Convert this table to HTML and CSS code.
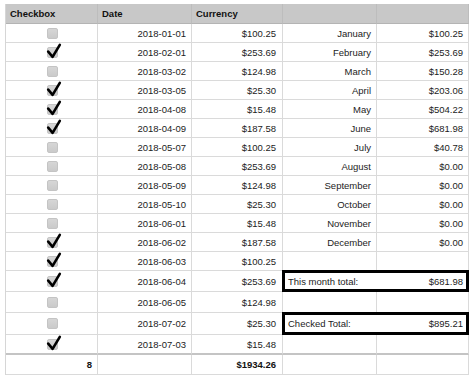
FILE: index.html
```html
<!DOCTYPE html>
<html>
<head>
<meta charset="utf-8">
<link rel="stylesheet" href="styles.css">
</head>
<body>
<div class="sheet">
  <div class="row head">
    <div class="cell">Checkbox</div><div class="cell">Date</div><div class="cell">Currency</div><div class="cell"></div><div class="cell"></div>
  </div>
  <div class="row"><div class="cell cb"><span class="box"></span></div><div class="cell num">2018-01-01</div><div class="cell num cur">$100.25</div><div class="cell num">January</div><div class="cell num">$100.25</div></div>
  <div class="row"><div class="cell cb"><span class="box on"><svg viewBox="0 0 14 15"><path d="M1.2 7.6 L5.6 12.8 L12.8 0.8"/></svg></span></div><div class="cell num">2018-02-01</div><div class="cell num cur">$253.69</div><div class="cell num">February</div><div class="cell num">$253.69</div></div>
  <div class="row"><div class="cell cb"><span class="box"></span></div><div class="cell num">2018-03-02</div><div class="cell num cur">$124.98</div><div class="cell num">March</div><div class="cell num">$150.28</div></div>
  <div class="row"><div class="cell cb"><span class="box on"><svg viewBox="0 0 14 15"><path d="M1.2 7.6 L5.6 12.8 L12.8 0.8"/></svg></span></div><div class="cell num">2018-03-05</div><div class="cell num cur">$25.30</div><div class="cell num">April</div><div class="cell num">$203.06</div></div>
  <div class="row"><div class="cell cb"><span class="box on"><svg viewBox="0 0 14 15"><path d="M1.2 7.6 L5.6 12.8 L12.8 0.8"/></svg></span></div><div class="cell num">2018-04-08</div><div class="cell num cur">$15.48</div><div class="cell num">May</div><div class="cell num">$504.22</div></div>
  <div class="row"><div class="cell cb"><span class="box on"><svg viewBox="0 0 14 15"><path d="M1.2 7.6 L5.6 12.8 L12.8 0.8"/></svg></span></div><div class="cell num">2018-04-09</div><div class="cell num cur">$187.58</div><div class="cell num">June</div><div class="cell num">$681.98</div></div>
  <div class="row"><div class="cell cb"><span class="box"></span></div><div class="cell num">2018-05-07</div><div class="cell num cur">$100.25</div><div class="cell num">July</div><div class="cell num">$40.78</div></div>
  <div class="row"><div class="cell cb"><span class="box"></span></div><div class="cell num">2018-05-08</div><div class="cell num cur">$253.69</div><div class="cell num">August</div><div class="cell num">$0.00</div></div>
  <div class="row"><div class="cell cb"><span class="box"></span></div><div class="cell num">2018-05-09</div><div class="cell num cur">$124.98</div><div class="cell num">September</div><div class="cell num">$0.00</div></div>
  <div class="row"><div class="cell cb"><span class="box"></span></div><div class="cell num">2018-05-10</div><div class="cell num cur">$25.30</div><div class="cell num">October</div><div class="cell num">$0.00</div></div>
  <div class="row"><div class="cell cb"><span class="box"></span></div><div class="cell num">2018-06-01</div><div class="cell num cur">$15.48</div><div class="cell num">November</div><div class="cell num">$0.00</div></div>
  <div class="row"><div class="cell cb"><span class="box on"><svg viewBox="0 0 14 15"><path d="M1.2 7.6 L5.6 12.8 L12.8 0.8"/></svg></span></div><div class="cell num">2018-06-02</div><div class="cell num cur">$187.58</div><div class="cell num">December</div><div class="cell num">$0.00</div></div>
  <div class="row"><div class="cell cb"><span class="box on"><svg viewBox="0 0 14 15"><path d="M1.2 7.6 L5.6 12.8 L12.8 0.8"/></svg></span></div><div class="cell num">2018-06-03</div><div class="cell num cur">$100.25</div><div class="cell"></div><div class="cell"></div></div>
  <div class="row r21"><div class="cell cb"><span class="box on"><svg viewBox="0 0 14 15"><path d="M1.2 7.6 L5.6 12.8 L12.8 0.8"/></svg></span></div><div class="cell num">2018-06-04</div><div class="cell num cur">$253.69</div><div class="cell total-box"><span>This month total:</span><span>$681.98</span></div></div>
  <div class="row r21"><div class="cell cb"><span class="box"></span></div><div class="cell num">2018-06-05</div><div class="cell num cur">$124.98</div><div class="cell"></div><div class="cell"></div></div>
  <div class="row r22"><div class="cell cb"><span class="box"></span></div><div class="cell num">2018-07-02</div><div class="cell num cur">$25.30</div><div class="cell total-box"><span>Checked Total:</span><span>$895.21</span></div></div>
  <div class="row r20 last"><div class="cell cb"><span class="box on"><svg viewBox="0 0 14 15"><path d="M1.2 7.6 L5.6 12.8 L12.8 0.8"/></svg></span></div><div class="cell num">2018-07-03</div><div class="cell num cur">$15.48</div><div class="cell"></div><div class="cell"></div></div>
  <div class="row r20 foot"><div class="cell num">8</div><div class="cell"></div><div class="cell num cur">$1934.26</div><div class="cell"></div><div class="cell"></div></div>
</div>
</body>
</html>
```

FILE: styles.css
```css
html, body {
  margin: 0;
  padding: 0;
  background: #fff;
}
body {
  font-family: "Liberation Sans", Arial, Helvetica, sans-serif;
  font-size: 9.5px;
  color: #1c1c1c;
}
.sheet {
  margin: 4px 0 0 5px;
  width: 464px;
  border-left: 1px solid #d6d6d6;
  box-sizing: border-box;
}
.row {
  display: grid;
  grid-template-columns: 92px 94px 91px 94px 92px;
  height: 19px;
}
.row.head { height: 20px; background: #c8c8c8; }
.row.r21 { height: 21px; }
.row.r22 { height: 22px; }
.row.r20 { height: 20px; }
.cell {
  box-sizing: border-box;
  border-right: 1px solid #dadada;
  border-bottom: 1px solid #dadada;
  padding: 0 5px;
  display: flex;
  align-items: center;
  white-space: nowrap;
  overflow: hidden;
}
.head .cell {
  font-weight: bold;
  color: #111;
  padding-left: 4px;
  border-right-color: #bdbdbd;
  border-bottom-color: #b4b4b4;
}
.num { justify-content: flex-end; }
.cur { padding-right: 6px; }
.cb { justify-content: center; padding: 0; overflow: visible; }
.box {
  position: relative;
  width: 11px;
  height: 11px;
  border-radius: 2px;
  background: linear-gradient(#d6d6d6, #cacaca);
  box-sizing: border-box;
  border: 1px solid #c4c4c4;
  margin-left: 1px;
}
.box svg {
  position: absolute;
  left: -1px;
  top: -4px;
  width: 14px;
  height: 15px;
  overflow: visible;
}
.box svg path {
  fill: none;
  stroke: #000;
  stroke-width: 2.6;
  stroke-linecap: round;
  stroke-linejoin: round;
}
.total-box {
  grid-column: span 2;
  position: relative;
  justify-content: space-between;
  overflow: visible;
}
.total-box::after {
  content: "";
  position: absolute;
  left: -1px;
  top: -1px;
  right: -1px;
  bottom: -1px;
  border: 3px solid #000;
  pointer-events: none;
}
.last .cell { border-bottom: 2px solid #c4c4c4; }
.foot .cell { font-weight: bold; color: #111; }
```
